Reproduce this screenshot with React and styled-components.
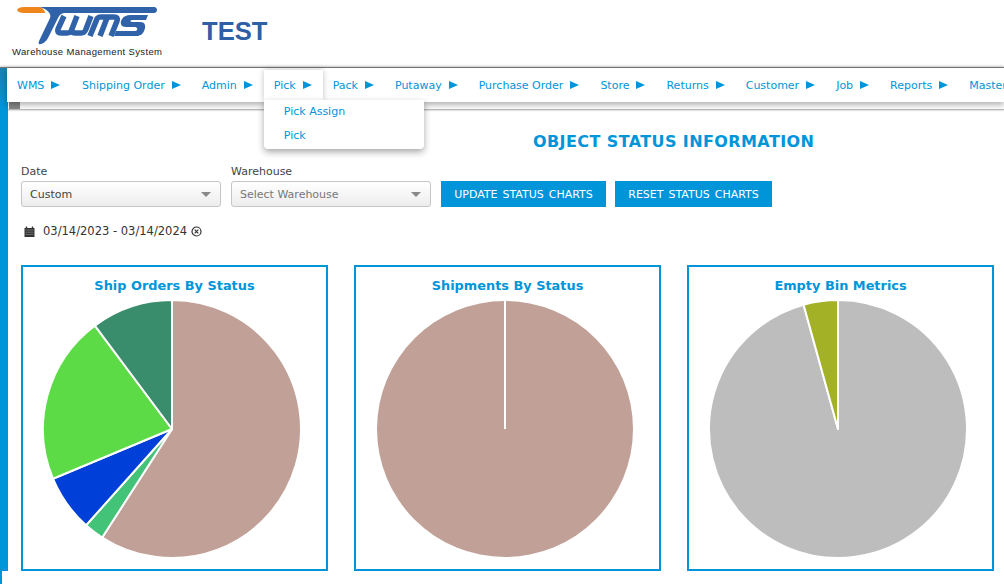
import React from 'react';
import styled, { createGlobalStyle } from 'styled-components';

const blue = '#0095d9';
const font = '"DejaVu Sans", Verdana, sans-serif';

const GlobalStyle = createGlobalStyle`
  html, body {
    margin: 0;
    padding: 0;
    background: #fff;
    overflow: hidden;
  }
  body {
    font-family: ${font};
    font-size: 11px;
    color: #333;
  }
`;

const Page = styled.div`
  width: 1004px;
  height: 584px;
  overflow: hidden;
`;

const Header = styled.header`
  height: 67px;
  display: flex;
  align-items: flex-start;
  padding-left: 12px;
`;

const LogoBox = styled.div`
  width: 190px;
  display: flex;
  flex-direction: column;
  padding-top: 6px;
`;

const LogoCaption = styled.div`
  font-family: "Liberation Sans", Arial, sans-serif;
  font-size: 9.5px;
  letter-spacing: 0.36px;
  line-height: 11px;
  color: #222;
`;

const Title = styled.h1`
  margin: 17px 0 0;
  font-family: "Liberation Sans", Arial, sans-serif;
  font-size: 25.6px;
  line-height: 29px;
  font-weight: 700;
  color: #2f5fa5;
`;

const Body = styled.div`
  display: flex;
  height: 516px;
  border-top: 1px solid #777;
  box-shadow: 0 -1px 2px rgba(0, 0, 0, 0.2);
`;

const SideRail = styled.div`
  width: 8px;
  flex: none;
  display: flex;
  flex-direction: column;
`;

const SideBar = styled.div`
  height: 503px;
  background: linear-gradient(#1783b0, ${blue} 40px);
`;

const SideTail = styled.div`
  width: 2px;
  height: 13px;
  background: ${blue};
`;

const Main = styled.main`
  flex: 1;
  min-width: 0;
`;

const Nav = styled.nav`
  height: 34px;
  display: flex;
  align-items: center;
  margin-left: -1px;
  background: #fff;
  box-shadow: 0 3px 6px rgba(0, 0, 0, 0.3);
  white-space: nowrap;
  position: relative;
  z-index: 2;
`;

const NavItem = styled.div`
  height: 30px;
  padding: 0 11px 0 10px;
  display: flex;
  align-items: center;
  gap: 7px;
  color: ${blue};
  flex: none;
  position: relative;
  &:first-child {
    padding-right: 11.6px;
  }
  ${(p) => p.$open && 'box-shadow: 0 0 6px rgba(0,0,0,.25); z-index: 4; background: #fff;'}
`;

const Arrow = styled.span`
  width: 0;
  height: 0;
  border-left: 9px solid ${blue};
  border-top: 4.5px solid transparent;
  border-bottom: 4.5px solid transparent;
`;

const SubMenu = styled.div`
  position: absolute;
  top: 30px;
  left: 0;
  width: 160px;
  height: 49px;
  background: #fff;
  border-radius: 0 0 4px 4px;
  box-shadow: 0 3px 7px rgba(0, 0, 0, 0.35);
`;

const SubItem = styled.div`
  height: 24px;
  line-height: 24px;
  padding-left: 20px;
  color: ${blue};
`;

const ScrollRow = styled.div`
  height: 7px;
  border-bottom: 1px solid #bbb;
  box-shadow: 0 1px 1px rgba(0, 0, 0, 0.1);
`;

const ScrollThumb = styled.div`
  width: 11px;
  height: 7px;
  background: #888;
  margin-left: 1px;
`;

const Content = styled.div`
  padding: 22px 0 0 13px;
`;

const Heading = styled.h2`
  margin: 0 0 13px;
  padding-left: 512px;
  font-size: 16px;
  line-height: 20px;
  letter-spacing: 0.4px;
  font-weight: 700;
  white-space: nowrap;
  color: ${blue};
`;

const FilterRow = styled.div`
  display: flex;
  align-items: flex-end;
  gap: 10px;
`;

const Field = styled.div`
  width: 200px;
  display: flex;
  flex-direction: column;
`;

const FieldLabel = styled.label`
  font-size: 11px;
  line-height: 13px;
  margin-bottom: 3px;
  color: #444;
`;

const Select = styled.div`
  height: 26px;
  box-sizing: border-box;
  border: 1px solid #c5c5c5;
  border-radius: 3px;
  background: linear-gradient(#fff, #ededed);
  display: flex;
  align-items: center;
  justify-content: space-between;
  padding: 0 9px 0 8px;
  color: ${(p) => (p.$placeholder ? '#777' : '#444')};
`;

const Caret = styled.span`
  width: 0;
  height: 0;
  border-top: 5px solid #888;
  border-left: 5px solid transparent;
  border-right: 5px solid transparent;
`;

const ActionButton = styled.button`
  width: ${(p) => p.$width}px;
  height: 26px;
  padding: 0;
  margin-right: -1px;
  border: none;
  background: ${blue};
  color: #fff;
  font-family: ${font};
  font-size: 11px;
  word-spacing: 1.5px;
  white-space: nowrap;
`;

const DateRange = styled.div`
  display: flex;
  align-items: center;
  margin: 16px 0 0 3px;
  height: 16px;
  font-size: 11.5px;
  color: #333;
`;

const DateText = styled.span`
  margin: 0 4px 0 8px;
`;

const Charts = styled.div`
  display: flex;
  gap: 26px;
  margin-top: 26px;
  width: 1100px;
`;

const ChartCard = styled.section`
  width: 307px;
  height: 306px;
  box-sizing: border-box;
  border: 2px solid ${blue};
  display: flex;
  flex-direction: column;
  align-items: center;
`;

const ChartTitle = styled.h3`
  margin: 11px 0 6px;
  font-size: 12.9px;
  line-height: 16px;
  font-weight: 700;
  color: ${blue};
`;

const PieWrap = styled.div`
  align-self: flex-start;
  margin-left: 20px;
  line-height: 0;
`;

const menu = [
  { label: 'WMS' },
  { label: 'Shipping Order' },
  { label: 'Admin' },
  { label: 'Pick', open: true },
  { label: 'Pack' },
  { label: 'Putaway' },
  { label: 'Purchase Order' },
  { label: 'Store' },
  { label: 'Returns' },
  { label: 'Customer' },
  { label: 'Job' },
  { label: 'Reports' },
  { label: 'Master' },
];

// values are percentages, clockwise from 12 o'clock
const charts = [
  {
    title: 'Ship Orders By Status',
    slices: [
      { value: 59.1, color: '#c1a197' },
      { value: 2.5, color: '#43c377' },
      { value: 7.1, color: '#0040d9' },
      { value: 21.1, color: '#5cdb47' },
      { value: 10.2, color: '#398c6c' },
    ],
  },
  {
    title: 'Shipments By Status',
    slices: [{ value: 100, color: '#c1a197' }],
  },
  {
    title: 'Empty Bin Metrics',
    slices: [
      { value: 95.7, color: '#bdbdbd' },
      { value: 4.3, color: '#a3b127' },
    ],
  },
];

const point = (pct, r) => {
  const a = (pct / 100) * 2 * Math.PI;
  return [129 + r * Math.sin(a), 129 - r * Math.cos(a)];
};

const Pie = ({ slices }) => {
  let total = 0;
  return (
    <svg width="258" height="258" viewBox="0 0 258 258">
      {slices.map((s) => {
        const from = total;
        total += s.value;
        if (s.value >= 100) {
          return (
            <g key={s.color}>
              <circle cx="129" cy="129" r="128" fill={s.color} />
              <line x1="129" y1="1" x2="129" y2="129" stroke="#fff" strokeWidth="2" />
            </g>
          );
        }
        // the white stroke eats a pixel of the rim, so draw one wider
        const [x1, y1] = point(from, 129);
        const [x2, y2] = point(total, 129);
        const large = s.value > 50 ? 1 : 0;
        return (
          <path
            key={s.color}
            d={`M129 129 L${x1} ${y1} A129 129 0 ${large} 1 ${x2} ${y2} Z`}
            fill={s.color}
            stroke="#fff"
            strokeWidth="2"
            strokeLinejoin="round"
          />
        );
      })}
    </svg>
  );
};

// viewBox is in page coordinates, easier to trace the logo that way
const Logo = () => (
  <svg width="152" height="40" viewBox="12 6 152 40">
    <path d="M17 10 C18 8 20 7 24 7 L40 7 C43 8 45 11 45 13 L24 13 C20 13 18 12 17 10 Z" fill="#ee861c" />
    <path d="M40 7 L154 7 C158 7 158 13 154 13 L66 13 C62 13 60 14 58 18 L48 38 C46 42 41 45 39 44 C38 43 39 41 40 39 L50 18 C52 14 47 9 40 7 Z" fill="#2f62a8" />
    <g fill="none" stroke="#2f62a8" strokeWidth="5.5">
      <path d="M64 16 L58 29 C57 32 58 33 61 33 L67 33 C70 33 71 32 72 29 L77 16" />
      <path d="M72 29 C71 32 72 33 75 33 L81 33 C84 33 85 32 86 29 L91 16" />
      <path d="M90 36 L97 19 C98 17 99 17 101 17 L114 17 C117 17 118 18 117 21 L111 36" />
      <path d="M107 18 L100 36" />
    </g>
    <path d="M148 15 L146 20 L132 20 C130 20 130 22 132 22 L140 22 C146 22 146 27 144 31 C143 34 140 36 136 36 L114 36 L116 31 L135 31 C138 31 138 27 135 27 L126 27 C120 27 120 22 122 19 C124 16 127 15 130 15 Z" fill="#2f62a8" />
  </svg>
);

const CalendarIcon = () => (
  <svg width="11" height="11" viewBox="0 0 11 11">
    <path d="M0.5 2 H10.5 V11 H0.5 Z" fill="#333" />
    <path d="M2.5 0.5 V2.5 M8.5 0.5 V2.5" stroke="#333" strokeWidth="1.4" />
    <path d="M1.5 4 H9.5 M1.5 6.2 H9.5 M1.5 8.4 H9.5" stroke="#aaa" strokeWidth="0.5" />
  </svg>
);

const ClearIcon = () => (
  <svg width="11" height="11" viewBox="0 0 11 11" fill="none" stroke="#333">
    <circle cx="5.5" cy="5.5" r="4.5" strokeWidth="1.2" />
    <path d="M3.7 3.7 L7.3 7.3 M7.3 3.7 L3.7 7.3" strokeWidth="1.2" />
  </svg>
);

const App = () => (
  <Page>
    <GlobalStyle />
    <Header>
      <LogoBox>
        <Logo />
        <LogoCaption>Warehouse Management System</LogoCaption>
      </LogoBox>
      <Title>TEST</Title>
    </Header>
    <Body>
      <SideRail>
        <SideBar />
        <SideTail />
      </SideRail>
      <Main>
        <Nav>
          {menu.map((item) => (
            <NavItem key={item.label} $open={item.open}>
              {item.label}
              <Arrow />
              {item.open && (
                <SubMenu>
                  <SubItem>Pick Assign</SubItem>
                  <SubItem>Pick</SubItem>
                </SubMenu>
              )}
            </NavItem>
          ))}
        </Nav>
        <ScrollRow>
          <ScrollThumb />
        </ScrollRow>
        <Content>
          <Heading>OBJECT STATUS INFORMATION</Heading>
          <FilterRow>
            <Field>
              <FieldLabel>Date</FieldLabel>
              <Select>
                Custom
                <Caret />
              </Select>
            </Field>
            <Field>
              <FieldLabel>Warehouse</FieldLabel>
              <Select $placeholder>
                Select Warehouse
                <Caret />
              </Select>
            </Field>
            <ActionButton $width={165}>UPDATE STATUS CHARTS</ActionButton>
            <ActionButton $width={157}>RESET STATUS CHARTS</ActionButton>
          </FilterRow>
          <DateRange>
            <CalendarIcon />
            <DateText>03/14/2023 - 03/14/2024</DateText>
            <ClearIcon />
          </DateRange>
          <Charts>
            {charts.map((chart) => (
              <ChartCard key={chart.title}>
                <ChartTitle>{chart.title}</ChartTitle>
                <PieWrap>
                  <Pie slices={chart.slices} />
                </PieWrap>
              </ChartCard>
            ))}
          </Charts>
        </Content>
      </Main>
    </Body>
  </Page>
);

export default App;
